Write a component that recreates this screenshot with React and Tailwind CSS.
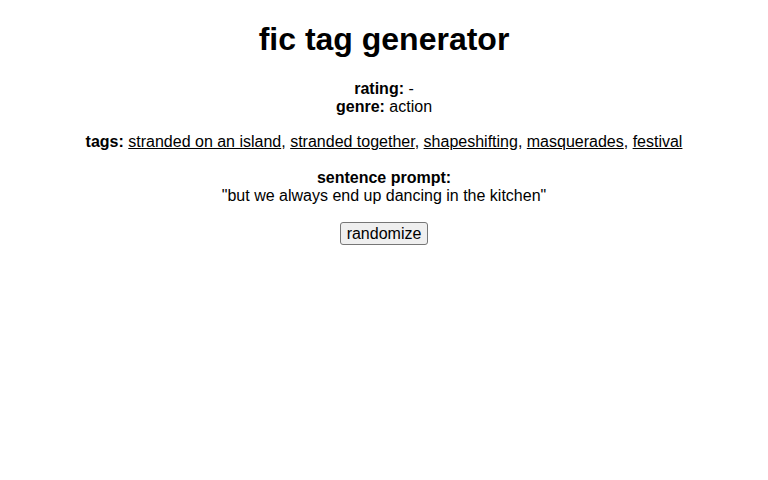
import React, { useState } from "react";

const RATINGS = ["-", "general", "teen", "mature", "explicit"];
const GENRES = ["action", "romance", "fluff", "angst", "mystery", "horror"];
const TAGS = [
	"stranded on an island",
	"stranded together",
	"shapeshifting",
	"masquerades",
	"festival",
	"fake dating",
	"time loop",
	"road trip",
];
const PROMPTS = [
	"but we always end up dancing in the kitchen",
	"you weren't supposed to find that letter",
	"the lights went out and nobody moved",
];

const pick = (arr) => arr[Math.floor(Math.random() * arr.length)];

export default function App() {
	const [fic, setFic] = useState({
		rating: "-",
		genre: "action",
		tags: TAGS.slice(0, 5),
		prompt: PROMPTS[0],
	});

	const randomize = () => {
		const shuffled = [...TAGS].sort(() => Math.random() - 0.5);
		setFic({
			rating: pick(RATINGS),
			genre: pick(GENRES),
			tags: shuffled.slice(0, 5),
			prompt: pick(PROMPTS),
		});
	};

	return (
		<div className="min-h-[480px] bg-white px-2 pb-2 pt-[21px] text-center font-['Liberation_Sans',Arial,sans-serif] text-[16px] leading-[18px] text-black">
			<h1 className="text-[32px] font-bold leading-[37px]">fic tag generator</h1>

			<p className="mt-[22px]">
				<b>rating:</b> {fic.rating}
				<br />
				<b>genre:</b> {fic.genre}
			</p>

			<p className="mt-[17px]">
				<b>tags:</b>{" "}
				{fic.tags.map((t, i) => (
					<React.Fragment key={t}>
						<a href="#" className="underline">
							{t}
						</a>
						{i < fic.tags.length - 1 && ", "}
					</React.Fragment>
				))}
			</p>

			<p className="mt-[18px]">
				<b>sentence prompt:</b>
				<br />"{fic.prompt}"
			</p>

			<button
				onClick={randomize}
				className="mt-[17px] rounded-[3px] border border-[#767676] bg-[#efefef] px-[6px] py-[1px] text-[16px] leading-[19px] text-black"
			>
				randomize
			</button>
		</div>
	);
}
